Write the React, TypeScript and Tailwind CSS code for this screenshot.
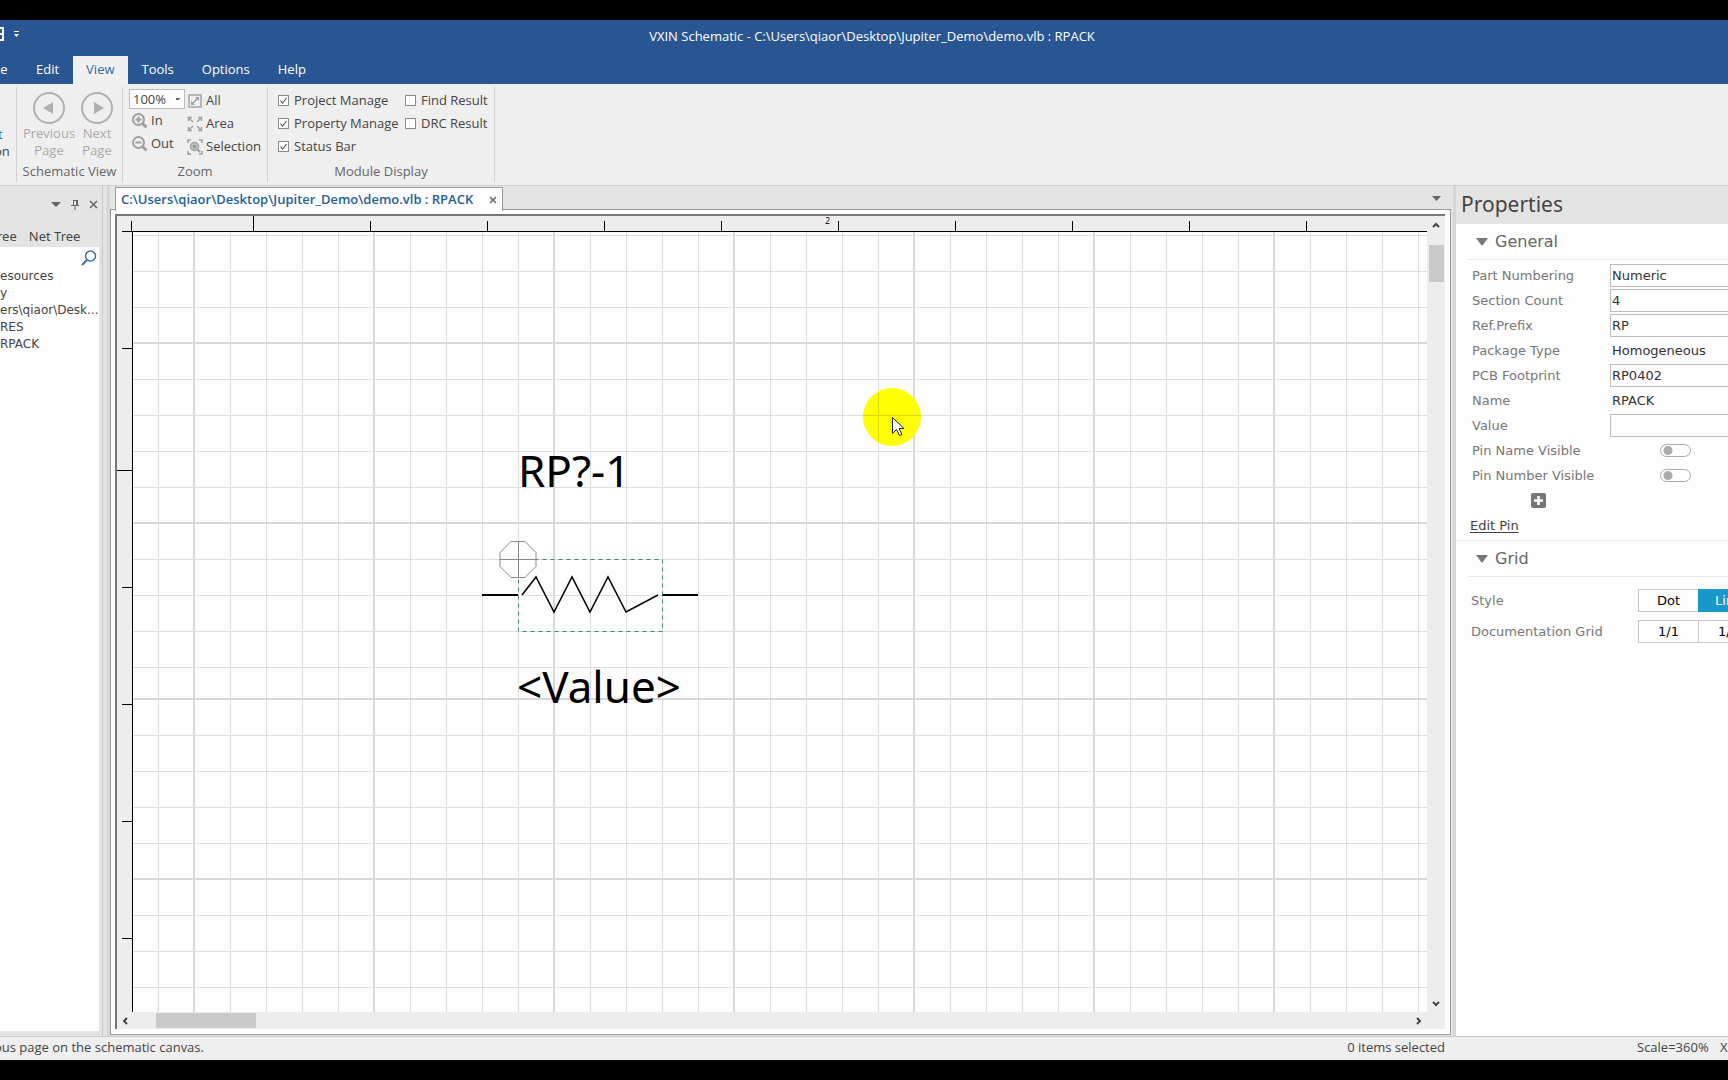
import type { ReactNode } from "react";

const UI = "font-['Open_Sans',sans-serif]";
const SANS = "font-['DejaVu_Sans',sans-serif]";

const MENU = ["Edit", "View", "Tools", "Options", "Help"];
const TREE = ["esources", "y", "ers\\qiaor\\Desk...", "RES", "RPACK"];

// drawing coordinates start at the top left corner of the ruler
const GRID_X = Array.from({ length: 36 }, (_, i) => 41 + i * 36);
const GRID_Y = [
  ...Array.from({ length: 13 }, (_, i) => 19 + i * 36),
  ...Array.from({ length: 9 }, (_, i) => 483 + i * 36),
];
const MAJOR_Y = [127, 307, 483, 663];
const TICKS_X = [14, 136, 253, 370, 487, 604, 721, 838, 955, 1072, 1189];
const TICKS_Y = [132, 254, 371, 488, 605, 722];

interface Field {
  label: string;
  value: string;
  editable: boolean;
}

const FIELDS: Field[] = [
  { label: "Part Numbering", value: "Numeric", editable: true },
  { label: "Section Count", value: "4", editable: true },
  { label: "Ref.Prefix", value: "RP", editable: true },
  { label: "Package Type", value: "Homogeneous", editable: false },
  { label: "PCB Footprint", value: "RP0402", editable: true },
  { label: "Name", value: "RPACK", editable: false },
  { label: "Value", value: "", editable: true },
];

function TitleBar() {
  return (
    <header className="relative flex h-9 items-center bg-[#285692] pb-[2px] text-white">
      <button aria-label="Save" className="-mt-[6px] -ml-3 h-4 w-4">
        <svg width="16" height="16" fill="none" stroke="currentColor" strokeWidth="2">
          <path d="M1 2h14v12H1zM5 2v4l3 2h6M6 14v-3h5v3" />
        </svg>
      </button>
      <button aria-label="Customize toolbar" className="-mt-[6px] ml-2">
        <svg width="9" height="8" fill="currentColor">
          <path d="M2 1h5v1H2zM2 4h5L4.500 7z" />
        </svg>
      </button>
      <h1 className="absolute inset-x-0 left-4 text-center text-[13px]">
        VXIN Schematic - C:\Users\qiaor\Desktop\Jupiter_Demo\demo.vlb : RPACK
      </h1>
    </header>
  );
}

function MenuBar() {
  return (
    <nav className="flex h-7 bg-[#285692] text-[13px] text-white">
      <button className="-ml-[6px] w-7 text-left">ce</button>
      {MENU.map((m) => (
        <button key={m} className={m === "View" ? "bg-[#f0f0f0] px-[13px] text-[#2a6ca8]" : "px-[14px]"}>
          {m}
        </button>
      ))}
    </nav>
  );
}

function Group({ title, children, className }: { title: string; children: ReactNode; className: string }) {
  return (
    <section className={`flex flex-col justify-between border-r border-[#d2d2d2] pb-px ${className}`}>
      {children}
      <h2 className="text-center text-[13px] leading-5 text-[#666]">{title}</h2>
    </section>
  );
}

function PageButton({ label, d }: { label: string; d: string }) {
  return (
    <button disabled className="flex w-12 flex-col items-center text-[13px] leading-[17px] text-[#a9a9a9]">
      <svg width="34" height="34" fill="none" stroke="#b0b0b0" strokeWidth="2">
        <circle cx="17" cy="17" r="15" />
        <path d={d} fill="#b0b0b0" stroke="none" />
      </svg>
      <span>{label}</span>
      <span>Page</span>
    </button>
  );
}

function Check({ label, checked }: { label: string; checked: boolean }) {
  return (
    <label className="flex h-[23px] items-center gap-[5px] whitespace-nowrap">
      <span className="relative flex">
        <input
          type="checkbox"
          defaultChecked={checked}
          className="peer h-[11px] w-[11px] appearance-none border border-[#8a8a8a] bg-white"
        />
        <svg className="pointer-events-none absolute inset-0 hidden peer-checked:block" width="11" height="11" fill="none" stroke="#555">
          <path d="M2.500 5.500l2 2.500 4-5" strokeWidth="1.200" />
        </svg>
      </span>
      {label}
    </label>
  );
}

function ZoomIcon({ kind }: { kind: string }) {
  return (
    <svg width="16" height="16" fill="none" stroke="#a0a0a0" strokeWidth="1.500">
      {kind === "in" && <path d="M6.500 3.500v6M3.500 6.500h6" strokeWidth="2" />}
      {kind === "out" && <path d="M3.500 6.500h6" strokeWidth="2" />}
      {(kind === "in" || kind === "out") && (
        <>
          <circle cx="6.500" cy="6.500" r="5.500" strokeWidth="2" />
          <path d="M10.500 10.500l4 4" strokeWidth="3" />
        </>
      )}
      {kind === "all" && (
        <>
          <path d="M2 2h12v12H2z" stroke="#b8b8b8" strokeWidth="2" />
          <path d="M5 11l6-6" />
          <path d="M8 4h4v4zM4 8v4h4z" fill="#a0a0a0" stroke="none" />
        </>
      )}
      {kind === "area" && (
        <>
          <path d="M2 2l4 4M14 2l-4 4M2 14l4-4M14 14l-4-4" />
          <path d="M1.500 5V1.500H5M11 1.500h3.500V5M14.500 11v3.500H11M5 14.500H1.500V11" />
        </>
      )}
      {kind === "selection" && (
        <>
          <path d="M1 4V1h3M12 1h3v3M15 12v3h-3M4 15H1v-3" />
          <circle cx="7.500" cy="7.500" r="4" fill="#ccc" />
          <circle cx="7.500" cy="7.500" r="1.500" fill="#888" />
          <path d="M10 10l3 3" strokeWidth="2" />
        </>
      )}
    </svg>
  );
}

function Ribbon() {
  return (
    <div className="flex h-[102px] border-b border-[#d0d0d0] bg-[#efefef] py-[3px] text-[13px] text-[#444]">
      <div className="flex w-[17px] flex-col border-r border-[#d2d2d2] pt-[39px] leading-[17px]">
        <span className="-ml-[2px] text-[#2a6ca8]">t</span>
        <span className="-ml-[6px]">on</span>
      </div>
      <Group title="Schematic View" className="w-[106px]">
        <div className="flex pt-1 pl-2">
          <PageButton label="Previous" d="M11 17l10-6v12z" />
          <PageButton label="Next" d="M24 17l-10-6v12z" />
        </div>
      </Group>
      <Group title="Zoom" className="w-[145px]">
        <div className="flex gap-[2px] pl-[6px]">
          <div className="flex flex-col">
            <select aria-label="Zoom level" className="mt-[2px] h-5 w-14 appearance-none border border-[#bbb] bg-white bg-[linear-gradient(45deg,transparent_50%,#666_50%),linear-gradient(-45deg,transparent_50%,#666_50%)] bg-[length:3px_3px] bg-[position:45px_8px,48px_8px] bg-no-repeat pl-[3px]">
              <option>100%</option>
            </select>
            <button className="flex h-[23px] items-center gap-[3px] pl-[3px]">
              <ZoomIcon kind="in" />
              In
            </button>
            <button className="flex h-[23px] items-center gap-[3px] pl-[3px]">
              <ZoomIcon kind="out" />
              Out
            </button>
          </div>
          <div className="flex flex-col pt-[2px]">
            <button className="flex h-[23px] items-center gap-[3px]">
              <ZoomIcon kind="all" />
              All
            </button>
            <button className="flex h-[23px] items-center gap-[3px]">
              <ZoomIcon kind="area" />
              Area
            </button>
            <button className="flex h-[23px] items-center gap-[3px]">
              <ZoomIcon kind="selection" />
              Selection
            </button>
          </div>
        </div>
      </Group>
      <Group title="Module Display" className="w-[227px]">
        <div className="flex gap-2 pt-[2px] pl-[10px]">
          <div className="w-[119px]">
            <Check label="Project Manage" checked />
            <Check label="Property Manage" checked />
            <Check label="Status Bar" checked />
          </div>
          <div>
            <Check label="Find Result" checked={false} />
            <Check label="DRC Result" checked={false} />
          </div>
        </div>
      </Group>
    </div>
  );
}

function TreePanel() {
  return (
    <aside className={`flex w-[103px] shrink-0 flex-col border-r border-[#c8c8c8] text-[#444] ${SANS}`}>
      <div className="flex h-[38px] items-center justify-end gap-[9px] pr-[3px] text-[#666]">
        <button aria-label="Panel menu">
          <svg width="10" height="6" fill="currentColor">
            <path d="M0 0h10L5 5z" />
          </svg>
        </button>
        <button aria-label="Pin panel">
          <svg width="10" height="12" fill="none" stroke="currentColor">
            <path d="M3 1.500h5M3.500 1v5M6.500 1v5M7.500 1v5M1 6.500h8M5 7v4" />
          </svg>
        </button>
        <button aria-label="Close panel">
          <svg width="10" height="10" fill="none" stroke="currentColor" strokeWidth="1.500">
            <path d="M1 1l7 7M8 1l-7 7" />
          </svg>
        </button>
      </div>
      <div className="flex h-[22px] items-end gap-3 text-[13px] font-['Noto_Sans',sans-serif]">
        <button className="-ml-[3px]">ree</button>
        <button>Net Tree</button>
      </div>
      <div className="mt-px mr-[3px] flex h-[21px] items-center bg-[#fdfdfd]">
        <input aria-label="Search tree" className="w-full min-w-0 flex-1 text-xs" />
        <svg width="16" height="16" fill="none" stroke="#3d6ea5" strokeWidth="1.500" className="mr-[2px]">
          <circle cx="9.500" cy="6" r="5" />
          <path d="M6 10l-5 5" strokeWidth="2" />
        </svg>
      </div>
      <ul className="mr-[3px] mb-[5px] flex-1 bg-[#fdfdfd] text-xs leading-[17px]">
        {TREE.map((t) => (
          <li key={t}>{t}</li>
        ))}
      </ul>
    </aside>
  );
}

function Schematic() {
  return (
    <svg width="100%" height="100%" className="block" shapeRendering="crispEdges">
      <rect width="100%" height="100%" fill="#fdfdfd" />
      {GRID_X.map((x, i) =>
        i % 5 === 1 ? (
          <rect key={x} x={x - 1} y="16" width="2" height="100%" fill="#d8d8d8" />
        ) : (
          <rect key={x} x={x} y="16" width="1" height="100%" fill="#dedede" />
        ),
      )}
      {GRID_Y.map((y) =>
        MAJOR_Y.includes(y) ? (
          <rect key={y} x="16" y={y - 1} width="100%" height="2" fill="#d8d8d8" />
        ) : (
          <rect key={y} x="16" y={y} width="100%" height="1" fill="#dedede" />
        ),
      )}
      <rect width="100%" height="15" fill="#ededed" />
      <rect width="15" height="100%" fill="#ededed" />
      <rect x="5" y="15" width="100%" height="1" />
      <rect x="15" y="15" width="1" height="100%" />
      {TICKS_X.map((x) => (
        <rect key={x} x={x} y={x === 136 ? 0 : 5} width="1" height={x === 136 ? 15 : 10} />
      ))}
      {TICKS_Y.map((y) => (
        <rect key={y} x={y === 254 ? 0 : 5} y={y} width={y === 254 ? 15 : 10} height="1" />
      ))}
      <text x="708" y="8" className="text-[9px]">2</text>

      {/* resistor pack symbol */}
      <g fill="none" shapeRendering="auto">
        <path d="M365 379h36M545 379h36" stroke="#000" strokeWidth="2" />
        <path d="M405 379l14-18 18 35 18-35 18 35 18-35 18 35 32-17" stroke="#000" strokeWidth="1.500" />
        <path d="M401.500 343.500h144v72h-144z" stroke="#3f8a86" strokeDasharray="4 4" />
        <path d="M394 325.500h14l11 11v14l-11 11h-14l-11-11v-14zM401.500 325v37M383 343.500h37" stroke="#888" />
      </g>
      <g className="font-['Noto_Sans',sans-serif] text-[44px]">
        <text x="401" y="271">RP?-1</text>
        <text x="400" y="487">&lt;Value&gt;</text>
      </g>

      {/* pointer with click highlight */}
      <circle cx="775" cy="201" r="29" fill="#ffff00" shapeRendering="auto" />
      <path d="M746 199.500h58M761.500 177v49" stroke="#000" strokeOpacity="0.15" />
      <path d="M775.500 201.500v16l4-4 3 6 2.500-1-3-6h5z" fill="#fff" stroke="#222" shapeRendering="auto" />
    </svg>
  );
}

function Chevron({ d, label, className }: { d: string; label: string; className?: string }) {
  return (
    <button aria-label={label} className={`flex ${className}`}>
      <svg width="8" height="8" fill="none" stroke="#444" strokeWidth="2">
        <path d={d} />
      </svg>
    </button>
  );
}

function Editor() {
  return (
    <main className="ml-1 flex min-w-0 flex-1 flex-col border-l-[3px] border-[#d6d6d6] pt-px pb-px">
      <div className="flex h-[22px] items-center justify-between">
        <div className="relative z-10 -mb-[2px] ml-[5px] flex h-6 items-center gap-4 border border-b-0 border-[#999] bg-[#fdfdfd] px-[5px] text-[13px] font-semibold text-[#1f6299]">
          C:\Users\qiaor\Desktop\Jupiter_Demo\demo.vlb : RPACK
          <button aria-label="Close document">
            <svg width="8" height="8" fill="none" stroke="#666" strokeWidth="1.500">
              <path d="M1 1l6 6M7 1l-6 6" />
            </svg>
          </button>
        </div>
        <button aria-label="Document list" className="mr-[10px]">
          <svg width="9" height="5" fill="#666">
            <path d="M0 0h9L4.500 5z" />
          </svg>
        </button>
      </div>
      <div className="flex min-h-0 flex-1 border border-[#999] bg-[#fdfdfd] pt-1 pr-[5px] pb-[5px] pl-1">
        <div className="grid min-w-0 flex-1 grid-cols-[1fr_18px] grid-rows-[1fr_17px] border-t-2 border-l-2 border-[#777] bg-[#ededed]">
          <div className="min-h-0 min-w-0 overflow-hidden">
            <Schematic />
          </div>
          <div className="flex flex-col items-center pt-[5px] pb-1">
            <Chevron label="Scroll up" d="M1 6l3-3 3 3" className="h-6 items-start" />
            <div className="h-[37px] w-[15px] bg-[#c9c9c9]" />
            <Chevron label="Scroll down" d="M1 2l3 3 3-3" className="mt-auto" />
          </div>
          <div className="flex items-center pl-1">
            <Chevron label="Scroll left" d="M6 1L3 4l3 3" className="w-[35px]" />
            <div className="h-[15px] w-[100px] bg-[#c9c9c9]" />
            <Chevron label="Scroll right" d="M2 1l3 3-3 3" className="mr-1 ml-auto" />
          </div>
        </div>
      </div>
    </main>
  );
}

function SectionTitle({ children }: { children: string }) {
  return (
    <h3 className="ml-3 flex h-9 items-center gap-[7px] border-b border-[#e8e8e8] pl-2 text-base text-[#666]">
      <svg width="12" height="8" fill="#777">
        <path d="M0 0h12L6 8z" />
      </svg>
      {children}
    </h3>
  );
}

function Toggle({ label }: { label: string }) {
  return (
    <label className="flex h-[25px] items-center">
      <span className="w-[188px]">{label}</span>
      <input
        type="checkbox"
        role="switch"
        className="h-[13px] w-[31px] appearance-none rounded-full border border-[#aaa] bg-[radial-gradient(circle_at_7px_50%,#aaa_4px,transparent_5px)]"
      />
    </label>
  );
}

function Choice({ options, active }: { options: string[]; active?: string }) {
  return (
    <div className="flex h-[23px] text-black">
      {options.map((o) => (
        <button
          key={o}
          className={`-mr-px w-[61px] shrink-0 border ${o === active ? "border-[#1a98cc] bg-[#1a98cc] text-white" : "border-[#c8c8c8]"}`}
        >
          {o}
        </button>
      ))}
    </div>
  );
}

function Properties() {
  return (
    <aside className={`ml-[2px] flex w-[275px] shrink-0 flex-col overflow-hidden border-l-[3px] border-[#d6d6d6] bg-[#fdfdfd] text-[13px] text-[#777] ${SANS}`}>
      <h2 className="flex h-[38px] items-center bg-[#e4e4e4] pl-[5px] font-['Noto_Sans',sans-serif] text-[21px] text-[#444]">Properties</h2>
      <SectionTitle>General</SectionTitle>
      <div className="flex flex-col border-b border-[#e8e8e8] pt-[3px] pl-4">
        {FIELDS.map((f) => (
          <label key={f.label} className="flex h-[25px] items-center">
            <span className="w-[138px] shrink-0">{f.label}</span>
            {f.editable ? (
              <input defaultValue={f.value} className="h-[23px] w-40 shrink-0 border border-[#bbb] pl-px text-[#333]" />
            ) : (
              <output className="pl-[2px] text-[#333]">{f.value}</output>
            )}
          </label>
        ))}
        <Toggle label="Pin Name Visible" />
        <Toggle label="Pin Number Visible" />
        <button aria-label="Add property" className="ml-[59px] h-6 w-4">
          <svg width="15" height="15">
            <rect width="15" height="15" rx="2" fill="#777" />
            <path d="M7.500 3v9M3 7.500h9" stroke="#fff" strokeWidth="2.500" />
          </svg>
        </button>
        <a href="#pin" className="-ml-[2px] flex h-7 items-center text-[#444] underline underline-offset-2">
          Edit Pin
        </a>
      </div>
      <SectionTitle>Grid</SectionTitle>
      <div className="flex flex-col gap-2 pt-3 pl-[15px]">
        <div className="flex items-center">
          <span className="w-[167px] shrink-0">Style</span>
          <Choice options={["Dot", "Line"]} active="Line" />
        </div>
        <div className="flex items-center">
          <span className="w-[167px] shrink-0">Documentation Grid</span>
          <Choice options={["1/1", "1/2"]} />
        </div>
      </div>
    </aside>
  );
}

export default function App() {
  return (
    <div className={`flex h-screen flex-col overflow-hidden bg-black py-5 ${UI}`}>
      <TitleBar />
      <MenuBar />
      <Ribbon />
      <div className="flex min-h-0 flex-1 bg-[#e4e4e4]">
        <TreePanel />
        <Editor />
        <Properties />
      </div>
      <footer className="flex h-6 items-center border-t border-[#c8c8c8] bg-[#efefef] pb-[2px] text-[13px] whitespace-nowrap text-[#444]">
        <span className="-ml-[6px] flex-1">ous page on the schematic canvas.</span>
        <span>0 items selected</span>
        <span className="ml-[192px] w-[83px]">Scale=360%</span>
        <span className="w-2 overflow-hidden">X</span>
      </footer>
    </div>
  );
}
